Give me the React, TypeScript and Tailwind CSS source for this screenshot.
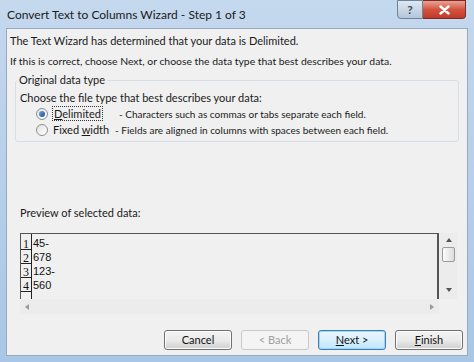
import React from 'react'

const ui = { fontFamily: 'Lato, "Open Sans", Arial, sans-serif' }

function Radio({ checked }: { checked?: boolean }) {
  return (
    <span className="w-[12px] h-[12px] rounded-full border border-[#8f8f8f] bg-gradient-to-br from-[#e2e2e2] to-[#ffffff] flex items-center justify-center shrink-0">
      {checked && <span className="w-[6px] h-[6px] rounded-full bg-gradient-to-br from-[#6ea5e0] to-[#1d4f91]" />}
    </span>
  )
}

function Btn({ children, disabled, focus }: { children: React.ReactNode; disabled?: boolean; focus?: boolean }) {
  return (
    <div
      className={`w-[68px] h-[20px] rounded-[3px] border flex items-center justify-center text-[11px] ${
        disabled
          ? 'border-[#c8c8c8] bg-[#f4f4f4] text-[#a0a0a0]'
          : focus
            ? 'border-[#3c7fb1] bg-gradient-to-b from-[#eaf6fd] via-[#d9f0fc] to-[#bee6fd] text-[#111] shadow-[inset_0_0_0_1px_#9fd5f5]'
            : 'border-[#707070] bg-gradient-to-b from-[#f2f2f2] via-[#ebebeb] to-[#cfcfcf] text-[#111] shadow-[inset_0_0_0_1px_#fcfcfc]'
      }`}
    >
      {children}
    </div>
  )
}

export default function App() {
  const rows = ['45-', '678', '123-', '560']

  return (
    <div className="w-[474px] h-[362px] overflow-hidden flex flex-col bg-gradient-to-b from-[#c4d8ee] to-[#a9c6e6]" style={ui}>
      {/* title bar */}
      <div className="h-[28px] flex items-start justify-between pl-[7px] pr-[8px] shrink-0">
        <span className="mt-[6px] text-[12px] text-[#1a1a1a] whitespace-nowrap">Convert Text to Columns Wizard - Step 1 of 3</span>
        <div className="flex h-[19px]">
          <div className="w-[26px] h-[19px] rounded-bl-[4px] border border-[#6d829b] bg-gradient-to-b from-[#dfe8f2] to-[#b4c6da] flex items-center justify-center text-[12px] font-bold text-[#3c4a5c]">?</div>
          <div className="w-[43px] h-[19px] rounded-br-[4px] border border-l-0 border-[#7d2a22] bg-gradient-to-b from-[#e8a294] via-[#d3533e] to-[#c0392b] flex items-center justify-center text-white">
            <svg width="11" height="10" viewBox="0 0 11 10">
              <path d="M1.5 1.5 L9.5 8.5 M9.5 1.5 L1.5 8.5" stroke="#fff" strokeWidth="2.4" strokeLinecap="round" />
            </svg>
          </div>
        </div>
      </div>

      {/* client */}
      <div className="mx-[6px] h-[328px] shrink-0 border border-[#97a9bd] bg-[#f0f0f0] text-[11px] text-[#1a1a1a] flex flex-col whitespace-nowrap">
        <div className="pl-[3px] pt-[2px] h-[22px] leading-[20px]">The Text Wizard has determined that your data is Delimited.</div>
        <div className="pl-[3px] h-[20px] leading-[20px] text-[10.4px]">If this is correct, choose Next, or choose the data type that best describes your data.</div>

        {/* group box */}
        <div className="relative mx-[8px] mt-[9px] h-[62px] border border-[#d5dfe5] rounded-[3px] pt-[8px] pl-[4px]">
          <span className="absolute -top-[8px] left-[1px] px-[2px] bg-[#f0f0f0] leading-[14px]">Original data type</span>
          <div className="h-[17px] leading-[17px]">Choose the file type that best describes your data:</div>
          <div className="flex items-center h-[16px] pl-[16px]">
            <Radio checked />
            <span className="ml-[4px] w-[67px]"><span className="border border-dotted border-[#333] px-[1px] leading-[13px]"><u>D</u>elimited</span></span>
            <span className="text-[10px]">- Characters such as commas or tabs separate each field.</span>
          </div>
          <div className="flex items-center h-[16px] pl-[16px]">
            <Radio />
            <span className="ml-[5px] w-[62px]">Fixed <u>w</u>idth</span>
            <span className="text-[10px]">- Fields are aligned in columns with spaces between each field.</span>
          </div>
        </div>

        <div className="pl-[13px] mt-[62px] h-[18px] leading-[18px]">Preview of selected data:</div>

        {/* preview */}
        <div className="flex mt-[11px] pl-[13px]">
          <div className="w-[419px] h-[81px] flex flex-col">
            <div className="h-[66px] border-l border-t border-r-2 border-[#555] bg-[#f0f0f0] overflow-hidden flex">
              <div className="w-[11px] border-r border-[#222] flex flex-col" style={{ fontFamily: '"Liberation Serif", serif' }}>
                {rows.map((_, i) => (
                  <div key={i} className="h-[14px] shrink-0 border-b border-[#222] text-[12px] leading-[17px] text-center text-[#111] first:mt-[2px]">{i + 1}</div>
                ))}
              </div>
              <div className="flex flex-col" style={{ fontFamily: '"Liberation Sans", Arial, sans-serif' }}>
                {rows.map((r) => (
                  <div key={r} className="h-[14px] shrink-0 text-[11px] leading-[14px] pl-[1px] text-[#111] first:mt-[2px]">{r}</div>
                ))}
              </div>
            </div>
            <div className="h-[15px] bg-[#ececec] flex items-center justify-between px-[5px]">
              <svg width="4" height="6" viewBox="0 0 4 6"><path d="M4 0 L0 3 L4 6Z" fill="#9a9a9a" /></svg>
              <svg width="4" height="6" viewBox="0 0 4 6"><path d="M0 0 L4 3 L0 6Z" fill="#9a9a9a" /></svg>
            </div>
          </div>
          <div className="w-[17px] h-[66px] ml-[1px] bg-[#ececec] flex flex-col items-center pt-[5px]">
            <svg width="6" height="4" viewBox="0 0 6 4"><path d="M0 4 L3 0 L6 4Z" fill="#555" /></svg>
            <div className="w-[13px] h-[15px] mt-[5px] border border-[#9a9a9a] rounded-[2px] bg-gradient-to-r from-[#fbfbfb] to-[#dcdcdc]" />
            <div className="flex-1" />
            <svg className="mb-[7px]" width="6" height="4" viewBox="0 0 6 4"><path d="M0 0 L3 4 L6 0Z" fill="#555" /></svg>
          </div>
        </div>

        {/* buttons */}
        <div className="flex justify-end gap-[9px] pr-[4px] mt-[16px]">
          <Btn>Cancel</Btn>
          <Btn disabled>&lt; Back</Btn>
          <Btn focus><span><u>N</u>ext &gt;</span></Btn>
          <Btn><span><u>F</u>inish</span></Btn>
        </div>
      </div>
    </div>
  )
}
